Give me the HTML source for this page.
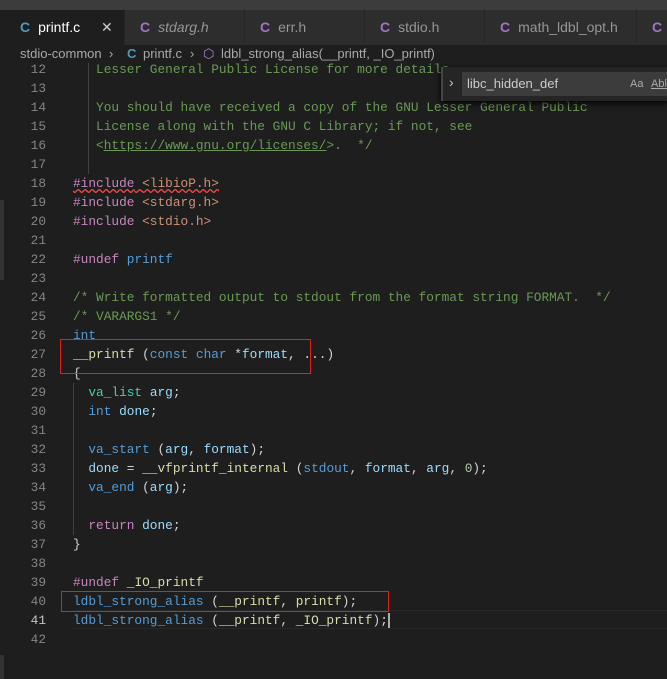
<!DOCTYPE html>
<html><head><style>
body{margin:0;width:667px;height:679px;background:#1e1e1e;overflow:hidden;position:relative;font-family:"Liberation Sans",sans-serif}
.title{position:absolute;left:0;top:0;width:667px;height:10px;background:#3c3c3c;z-index:3}
.tabs{position:absolute;left:0;top:10px;width:667px;height:35px;background:#252526;z-index:3}
.tab{position:absolute;top:0;height:35px;background:#2d2d2d;color:#969696;font-size:14px;line-height:35px;border-right:1px solid #252526;box-sizing:border-box;white-space:nowrap}
.tab b{font-weight:bold;margin-right:8px}
.bc{position:absolute;left:0;top:45px;width:667px;height:18px;color:#a9a9a9;font-size:13px;line-height:18px;background:#1e1e1e;z-index:3}
.code{position:absolute;left:0;top:60px;font-family:"Liberation Mono",monospace;font-size:12.8px;line-height:19px;white-space:pre}
.ln{position:absolute;left:0;width:46px;text-align:right;color:#858585}
.t{position:absolute;left:73px;color:#d4d4d4}
.c{color:#6a9955}.k{color:#c586c0}.s{color:#ce9178}.b{color:#569cd6}.f{color:#dcdcaa}.v{color:#9cdcfe}.ty{color:#4ec9b0}.n{color:#b5cea8}
</style></head><body>
<div class="title"></div>
<div class="tabs">
<div class="tab" style="left:0;width:125px;background:#1e1e1e;color:#fff;padding-left:20px"><b style="color:#519aba">C</b>printf.c<span style="position:absolute;left:101px;color:#ccc">✕</span></div>
<div class="tab" style="left:125px;width:120px;padding-left:15px"><b style="color:#a074c4">C</b><i>stdarg.h</i></div>
<div class="tab" style="left:245px;width:120px;padding-left:15px"><b style="color:#a074c4">C</b>err.h</div>
<div class="tab" style="left:365px;width:120px;padding-left:15px"><b style="color:#a074c4">C</b>stdio.h</div>
<div class="tab" style="left:485px;width:152px;padding-left:15px"><b style="color:#a074c4">C</b>math_ldbl_opt.h</div>
<div class="tab" style="left:637px;width:40px;padding-left:15px"><b style="color:#a074c4">C</b></div>
</div>
<div class="bc"><span style="position:absolute;left:20px">stdio-common</span><span style="position:absolute;left:109px">›</span><b style="position:absolute;left:127px;color:#519aba">C</b><span style="position:absolute;left:143px">printf.c</span><span style="position:absolute;left:190px">›</span><span style="position:absolute;left:203px;color:#b180d7">⬡</span><span style="position:absolute;left:221px">ldbl_strong_alias(__printf, _IO_printf)</span></div>
<div style="position:absolute;left:88px;top:60px;width:1px;height:114px;background:#404040"></div>
<div style="position:absolute;left:73px;top:383px;width:1px;height:152px;background:#404040"></div>
<div style="position:absolute;left:73px;top:610px;width:594px;height:17px;border-top:1px solid #282828;border-bottom:1px solid #282828"></div>
<div class="code">
<div class="ln" style="top:0">12</div><div class="t c" style="top:0">   Lesser General Public License for more details.</div>
<div class="ln" style="top:19px">13</div>
<div class="ln" style="top:38px">14</div><div class="t c" style="top:38px">   You should have received a copy of the GNU Lesser General Public</div>
<div class="ln" style="top:57px">15</div><div class="t c" style="top:57px">   License along with the GNU C Library; if not, see</div>
<div class="ln" style="top:76px">16</div><div class="t c" style="top:76px">   &lt;<u>https://www.gnu.org/licenses/</u>&gt;.  */</div>
<div class="ln" style="top:95px">17</div>
<div class="ln" style="top:114px">18</div><div class="t" style="top:114px;text-decoration:underline wavy #f14c4c"><span class="k">#include</span> <span class="s">&lt;libioP.h&gt;</span></div>
<div class="ln" style="top:133px">19</div><div class="t" style="top:133px"><span class="k">#include</span> <span class="s">&lt;stdarg.h&gt;</span></div>
<div class="ln" style="top:152px">20</div><div class="t" style="top:152px"><span class="k">#include</span> <span class="s">&lt;stdio.h&gt;</span></div>
<div class="ln" style="top:171px">21</div>
<div class="ln" style="top:190px">22</div><div class="t" style="top:190px"><span class="k">#undef</span> <span class="b">printf</span></div>
<div class="ln" style="top:209px">23</div>
<div class="ln" style="top:228px">24</div><div class="t c" style="top:228px">/* Write formatted output to stdout from the format string FORMAT.  */</div>
<div class="ln" style="top:247px">25</div><div class="t c" style="top:247px">/* VARARGS1 */</div>
<div class="ln" style="top:266px">26</div><div class="t b" style="top:266px">int</div>
<div class="ln" style="top:285px">27</div><div class="t" style="top:285px"><span class="f">__printf</span> (<span class="b">const</span> <span class="b">char</span> *<span class="v">format</span>, ...)</div>
<div class="ln" style="top:304px">28</div><div class="t" style="top:304px">{</div>
<div class="ln" style="top:323px">29</div><div class="t" style="top:323px">  <span class="ty">va_list</span> <span class="v">arg</span>;</div>
<div class="ln" style="top:342px">30</div><div class="t" style="top:342px">  <span class="b">int</span> <span class="v">done</span>;</div>
<div class="ln" style="top:361px">31</div>
<div class="ln" style="top:380px">32</div><div class="t" style="top:380px">  <span class="b">va_start</span> (<span class="v">arg</span>, <span class="v">format</span>);</div>
<div class="ln" style="top:399px">33</div><div class="t" style="top:399px">  <span class="v">done</span> = <span class="f">__vfprintf_internal</span> (<span class="b">stdout</span>, <span class="v">format</span>, <span class="v">arg</span>, <span class="n">0</span>);</div>
<div class="ln" style="top:418px">34</div><div class="t" style="top:418px">  <span class="b">va_end</span> (<span class="v">arg</span>);</div>
<div class="ln" style="top:437px">35</div>
<div class="ln" style="top:456px">36</div><div class="t" style="top:456px">  <span class="k">return</span> <span class="v">done</span>;</div>
<div class="ln" style="top:475px">37</div><div class="t" style="top:475px">}</div>
<div class="ln" style="top:494px">38</div>
<div class="ln" style="top:513px">39</div><div class="t" style="top:513px"><span class="k">#undef</span> <span class="f">_IO_printf</span></div>
<div class="ln" style="top:532px">40</div><div class="t" style="top:532px"><span class="b">ldbl_strong_alias</span> (<span class="f">__printf</span>, <span class="f">printf</span>);</div>
<div class="ln" style="top:551px;color:#c6c6c6">41</div><div class="t" style="top:551px"><span class="b">ldbl_strong_alias</span> (<span class="f">__printf</span>, <span class="f">_IO_printf</span>);<span style="border-left:2px solid #aeafad"></span></div>
<div class="ln" style="top:570px">42</div>
</div>
<div style="position:absolute;left:60px;top:339px;width:249px;height:33px;border:1px solid #e02020"></div>
<div style="position:absolute;left:61px;top:591px;width:326px;height:19px;border:1px solid #e02020"></div>
<div style="position:absolute;left:441px;top:67px;width:226px;height:34px;background:#252526;box-shadow:0 2px 6px #000;border-left:2px solid #454545"></div>
<div style="position:absolute;left:449px;top:74px;color:#c5c5c5;font-size:14px">›</div>
<div style="position:absolute;left:462px;top:72px;width:205px;height:24px;background:#3c3c3c;color:#ccc;font-size:13px;line-height:24px;padding-left:5px;box-sizing:border-box">libc_hidden_def<span style="position:absolute;left:168px;color:#aaa;font-size:11px">Aa</span><span style="position:absolute;left:189px;color:#aaa;font-size:11px;text-decoration:underline">Abl</span></div>
<div style="position:absolute;left:0;top:200px;width:4px;height:80px;background:#333"></div>
<div style="position:absolute;left:0;top:655px;width:4px;height:24px;background:#333"></div>
</body></html>
